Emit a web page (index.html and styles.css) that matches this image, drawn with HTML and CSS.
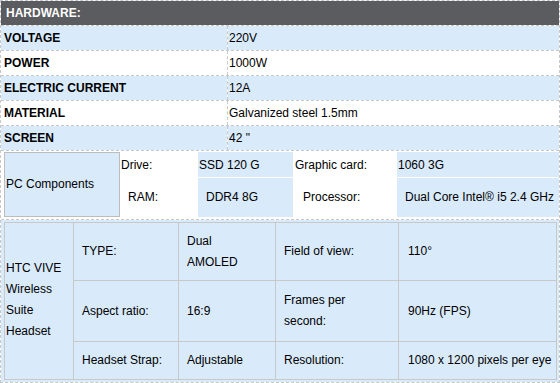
FILE: index.html
```html
<!DOCTYPE html>
<html>
<head>
<meta charset="utf-8">
<link rel="stylesheet" href="styles.css">
</head>
<body>
<div class="spec">
  <div class="spec-head">HARDWARE:</div>
  <div class="spec-row alt"><div class="label">VOLTAGE</div><div class="value">220V</div></div>
  <div class="spec-row"><div class="label">POWER</div><div class="value">1000W</div></div>
  <div class="spec-row alt"><div class="label">ELECTRIC CURRENT</div><div class="value">12A</div></div>
  <div class="spec-row"><div class="label">MATERIAL</div><div class="value">Galvanized steel 1.5mm</div></div>
  <div class="spec-row alt"><div class="label">SCREEN</div><div class="value">42 "</div></div>

  <div class="pc-section">
    <div class="pc-grid">
      <div class="pc-title">PC Components</div>
      <div class="pc-key">Drive:</div>
      <div class="pc-val">SSD 120 G</div>
      <div class="pc-key pad2">Graphic card:</div>
      <div class="pc-val">1060 3G</div>
      <div class="pc-key indent">RAM:</div>
      <div class="pc-val indent">DDR4 8G</div>
      <div class="pc-key indent2">Processor:</div>
      <div class="pc-val indent">Dual Core Intel® i5 2.4 GHz</div>
    </div>
  </div>

  <div class="htc-section">
    <div class="htc-grid">
      <div class="htc-name">HTC VIVE Wireless Suite Headset</div>
      <div class="htc-cell">TYPE:</div>
      <div class="htc-cell">Dual<br>AMOLED</div>
      <div class="htc-cell">Field of view:</div>
      <div class="htc-cell wide">110°</div>
      <div class="htc-cell">Aspect ratio:</div>
      <div class="htc-cell">16:9</div>
      <div class="htc-cell">Frames per<br>second:</div>
      <div class="htc-cell wide">90Hz (FPS)</div>
      <div class="htc-cell">Headset Strap:</div>
      <div class="htc-cell">Adjustable</div>
      <div class="htc-cell">Resolution:</div>
      <div class="htc-cell wide">1080 x 1200 pixels per eye</div>
    </div>
  </div>
</div>
</body>
</html>
```
FILE: styles.css
```css
html, body {
  margin: 0;
  padding: 0;
  background: #fff;
}

body {
  font-family: "Liberation Sans", Arial, sans-serif;
  font-size: 12px;
  color: #000;
}

.spec {
  width: 560px;
  height: 383px;
  box-sizing: border-box;
  border: 1px dashed #c8c8c8;
  background: #fff;
}

.spec-head {
  height: 25px;
  box-sizing: border-box;
  border-bottom: 1px dashed #c8c8c8;
  background: #5b5c60;
  background-clip: padding-box;
  color: #fff;
  font-weight: bold;
  line-height: 24px;
  padding-left: 5px;
}

.spec-row {
  display: grid;
  grid-template-columns: 227px 1fr;
  height: 25px;
  box-sizing: border-box;
  border-bottom: 1px dashed #c8c8c8;
  line-height: 24px;
}

.spec-row.alt > div {
  background: #d9eafb;
  background-clip: padding-box;
}

.label {
  font-weight: bold;
  padding-left: 3px;
  border-right: 1px dashed #c8c8c8;
  white-space: nowrap;
}

.value {
  padding-left: 1px;
  white-space: nowrap;
}

/* PC components */
.pc-section {
  height: 69px;
  box-sizing: border-box;
  border-bottom: 1px dashed #c8c8c8;
  padding: 1px 0 2px 3px;
}

.pc-grid {
  display: grid;
  grid-template-columns: 116px 78px 95px 104px 162px;
  grid-template-rows: 25px 39px;
  row-gap: 1px;
  height: 65px;
  background: #fff;
}

.pc-title {
  grid-row: 1 / span 2;
  border: 1px solid #bdbdbd;
  background: #d9eafb;
  display: flex;
  align-items: center;
  padding-left: 1px;
  padding-bottom: 2px;
  white-space: nowrap;
}

.pc-key,
.pc-val {
  display: flex;
  align-items: center;
  white-space: nowrap;
  padding-left: 1px;
}

.pc-key {
  background: #fff;
}

.pc-val {
  background: #d9eafb;
}

.pc-key.pad2 {
  padding-left: 2px;
}

.pc-key.indent,
.pc-val.indent {
  padding-left: 8px;
  padding-bottom: 2px;
}

.pc-key.indent2 {
  padding-left: 10px;
  padding-bottom: 2px;
}

/* HTC VIVE */
.htc-section {
  height: 162px;
  box-sizing: border-box;
  padding: 2px 2px 2px 3px;
  background: #d9eafb;
}

.htc-grid {
  display: grid;
  grid-template-columns: 69px 105px 97px 123px 158px;
  grid-template-rows: 58px 61px 38px;
  border-top: 1px solid #c8c8c8;
  border-left: 1px solid #c8c8c8;
  background: #d9eafb;
}

.htc-name,
.htc-cell {
  box-sizing: border-box;
  border-right: 1px solid #c8c8c8;
  border-bottom: 1px solid #c8c8c8;
  display: flex;
  align-items: center;
  line-height: 21px;
}

.htc-name {
  grid-row: 1 / span 3;
  padding: 0 1px 2px 1px;
}

.htc-cell {
  padding: 0 4px 0 8px;
  white-space: nowrap;
}

.htc-cell.wide {
  padding-left: 9px;
}
```
